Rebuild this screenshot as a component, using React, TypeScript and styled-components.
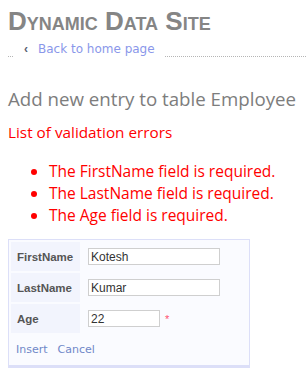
import React, { useState } from "react";
import styled, { createGlobalStyle } from "styled-components";

const GlobalStyle = createGlobalStyle`
  body {
    margin: 0;
    background: #fff;
    font-family: "Liberation Sans", Arial, sans-serif;
  }
`;

const Page = styled.div`
  padding: 6px 0 0 8px;
`;

const SiteTitle = styled.h1`
  margin: 0;
  font-size: 26px;
  font-weight: bold;
  font-variant: small-caps;
  color: #858585;
  line-height: 30px;
`;

const BackBar = styled.div`
  display: flex;
  align-items: baseline;
  margin-top: 6px;
  height: 18px;
`;

const Dots = styled.span<{ grow?: boolean }>`
  border-bottom: 1px dotted #b5b5b5;
  width: ${({ grow }) => (grow ? "auto" : "5px")};
  flex: ${({ grow }) => (grow ? "1" : "none")};
  align-self: flex-end;
  margin-bottom: 3px;
`;

const Chevron = styled.span`
  margin: 0 10px 0 11px;
  font-size: 12px;
  font-weight: bold;
  color: #5a6070;
`;

const BackLink = styled.a`
  font-family: "DejaVu Sans", Verdana, sans-serif;
  font-size: 12px;
  color: #8a97ea;
  text-decoration: none;
  margin-right: 10px;
`;

const Heading = styled.h2`
  margin: 28px 0 0;
  font-family: "Open Sans", sans-serif;
  font-size: 18.7px;
  font-weight: normal;
  color: #7d7d7d;
  line-height: 22px;
`;

const ErrorTitle = styled.div`
  margin-top: 12px;
  font-family: "Open Sans", sans-serif;
  font-size: 15.3px;
  color: #ff0000;
  line-height: 20px;
`;

const ErrorList = styled.ul`
  margin: 18px 0 0;
  padding-left: 41px;
  font-family: "Open Sans", sans-serif;
  color: #ff0000;
  font-size: 15.5px;
  line-height: 22px;
`;

const FormBox = styled.div`
  margin-top: 13px;
  width: 240px;
  background: #fafbff;
  border: 1px solid #dcdff8;
  border-bottom-width: 3px;
`;

const Table = styled.table`
  border-spacing: 2px;
  font-size: 11px;
`;

const LabelCell = styled.td`
  width: 57px;
  height: 29px;
  padding: 0 6px;
  background: #f2f4fd;
  font-weight: bold;
  color: #555;
  font-size: 11.5px;
`;

const FieldCell = styled.td`
  padding: 0 6px;
  white-space: nowrap;
`;

const TextInput = styled.input<{ w: number }>`
  box-sizing: border-box;
  width: ${({ w }) => w}px;
  height: 17px;
  border: 1px solid #cfcfcf;
  padding: 0 2px;
  font-family: "Liberation Sans", Arial, sans-serif;
  font-size: 12px;
  color: #333;
  background: #fff;
  outline: none;
  vertical-align: middle;
`;

const Required = styled.span`
  color: #ff4f6f;
  font-size: 11px;
  margin-left: 5px;
  vertical-align: middle;
`;

const Actions = styled.div`
  display: flex;
  gap: 10px;
  padding: 8px 0 9px 7px;
`;

const ActionLink = styled.a`
  font-family: "DejaVu Sans", Verdana, sans-serif;
  font-size: 11px;
  color: #7088c8;
  text-decoration: none;
`;

export default function App() {
  const [first, setFirst] = useState("Kotesh");
  const [last, setLast] = useState("Kumar");
  const [age, setAge] = useState("22");

  return (
    <Page>
      <GlobalStyle />
      <SiteTitle>Dynamic Data Site</SiteTitle>
      <BackBar>
        <Dots />
        <Chevron>‹</Chevron>
        <BackLink href="#">Back to home page</BackLink>
        <Dots grow />
      </BackBar>
      <Heading>Add new entry to table Employee</Heading>
      <ErrorTitle>List of validation errors</ErrorTitle>
      <ErrorList>
        <li>The FirstName field is required.</li>
        <li>The LastName field is required.</li>
        <li>The Age field is required.</li>
      </ErrorList>
      <FormBox>
        <Table>
          <tbody>
            <tr>
              <LabelCell>FirstName</LabelCell>
              <FieldCell>
                <TextInput w={132} value={first} onChange={(e) => setFirst(e.target.value)} />
              </FieldCell>
            </tr>
            <tr>
              <LabelCell>LastName</LabelCell>
              <FieldCell>
                <TextInput w={132} value={last} onChange={(e) => setLast(e.target.value)} />
              </FieldCell>
            </tr>
            <tr>
              <LabelCell>Age</LabelCell>
              <FieldCell>
                <TextInput w={72} value={age} onChange={(e) => setAge(e.target.value)} />
                <Required>*</Required>
              </FieldCell>
            </tr>
          </tbody>
        </Table>
        <Actions>
          <ActionLink href="#">Insert</ActionLink>
          <ActionLink href="#">Cancel</ActionLink>
        </Actions>
      </FormBox>
    </Page>
  );
}
